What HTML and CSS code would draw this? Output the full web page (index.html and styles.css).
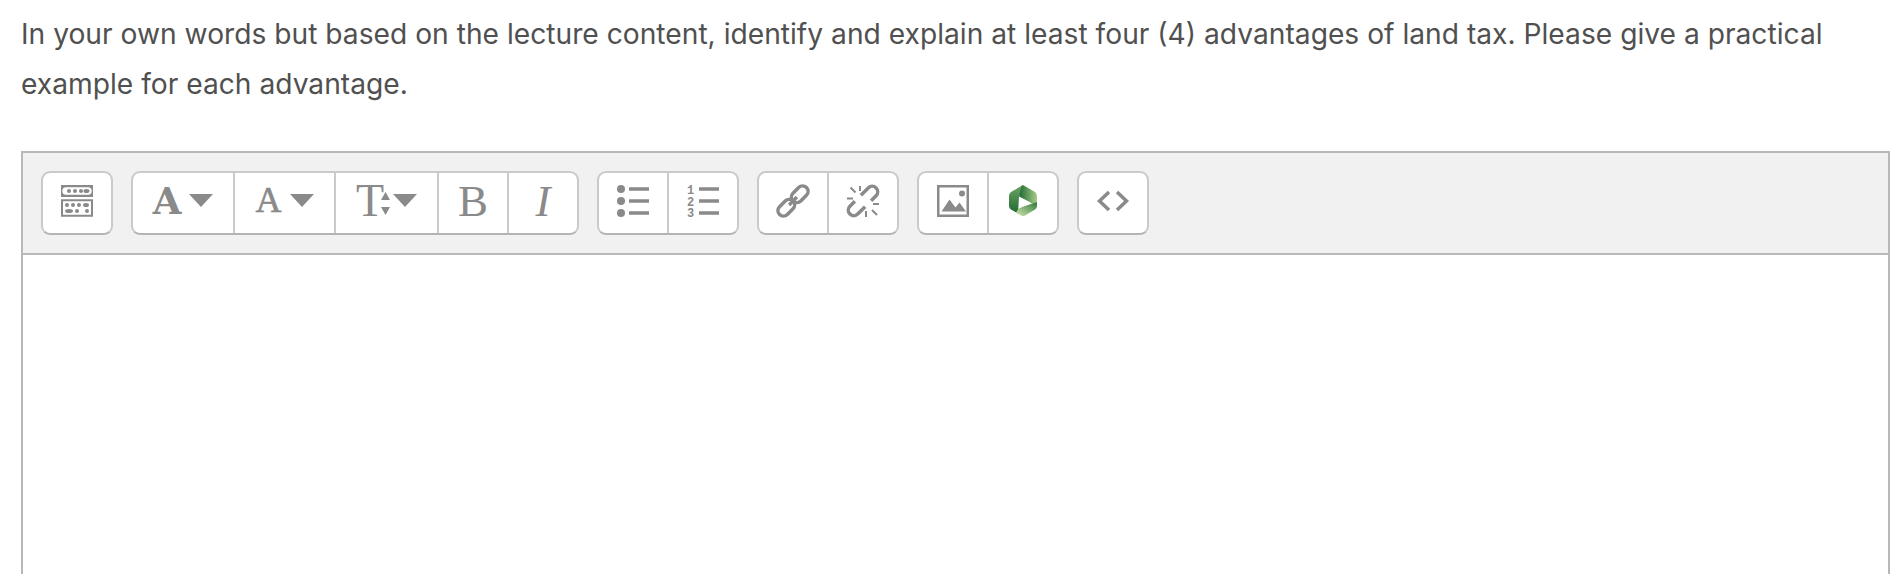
FILE: index.html
```html
<!DOCTYPE html>
<html>
<head>
  <title>Essay question</title>
  <meta charset="UTF-8">
  <link rel="stylesheet" href="styles.css">
</head>
<body>

<p class="question">In your own words but based on the lecture content, identify and explain at least four (4) advantages of land tax. Please give a practical example for each advantage.</p>

<div class="editor">
  <div class="toolbar">

    <div class="group">
      <button class="btn">
        <svg class="icon" viewBox="0 0 32 32">
          <path class="fill" fill-rule="evenodd" d="M0 0h32v12H0z M5 2.300a3.700 3.700 0 0 0 0 7.400h22a3.700 3.700 0 0 0 0-7.400z M0 14.300h32v17.500H0z M2 16.300v13.500h28V16.300z"/>
          <circle class="fill" cx="8" cy="6" r="2"/><circle class="fill" cx="14" cy="6" r="2"/><circle class="fill" cx="20" cy="6" r="2"/><ellipse class="fill" cx="25.500" cy="6" rx="3" ry="2"/>
          <circle class="fill" cx="6" cy="20" r="2"/><circle class="fill" cx="12" cy="20" r="2"/><circle class="fill" cx="18" cy="20" r="2"/><ellipse class="fill" cx="25" cy="20" rx="3" ry="2"/>
          <ellipse class="fill" cx="8" cy="26" rx="4" ry="2"/><circle class="fill" cx="16" cy="26" r="2"/><circle class="fill" cx="26" cy="26" r="2"/>
        </svg>
      </button>
    </div>

    <div class="group">
      <button class="btn btn-first">
        <span class="glyph glyph-font">A</span>
        <span class="caret"></span>
      </button>
      <button class="btn btn-font">
        <span class="glyph glyph-face">A</span>
        <span class="caret"></span>
      </button>
      <button class="btn btn-size">
        <span class="glyph glyph-size">T</span>
        <svg class="size-arrows" viewBox="0 0 9 24">
          <path class="fill" d="M4.500 0L9 8H0z M0 15h9l-4.500 8z"/>
        </svg>
        <span class="caret"></span>
      </button>
      <button class="btn"><span class="glyph glyph-big">B</span></button>
      <button class="btn"><span class="glyph glyph-big glyph-italic">I</span></button>
    </div>

    <div class="group">
      <button class="btn">
        <svg class="icon" viewBox="0 0 32 32">
          <circle class="fill" cx="4" cy="4" r="4"/><circle class="fill" cx="4" cy="16" r="4"/><circle class="fill" cx="4" cy="28" r="4"/>
          <path class="fill" d="M12 2.200h20v3.600H12z M12 14.200h20v3.600H12z M12 26.200h20v3.600H12z"/>
        </svg>
      </button>
      <button class="btn">
        <svg class="icon" viewBox="0 0 32 32">
          <text class="list-num" x="0" y="9">1</text><text class="list-num" x="0" y="21">2</text><text class="list-num" x="0" y="32">3</text>
          <path class="fill" d="M12 2.200h20v3.600H12z M12 14.200h20v3.600H12z M12 26.200h20v3.600H12z"/>
        </svg>
      </button>
    </div>

    <div class="group">
      <button class="btn">
        <svg class="icon" viewBox="0 0 32 32">
          <g class="line" transform="rotate(-45 16 16)">
            <rect x="-3" y="10.500" width="19" height="11" rx="5.500"/>
            <rect x="16" y="10.500" width="19" height="11" rx="5.500"/>
            <path d="M10.500 16h11"/>
          </g>
        </svg>
      </button>
      <button class="btn">
        <svg class="icon" viewBox="0 0 32 32">
          <g class="line" transform="rotate(-45 16 16)">
            <path d="M10 10.500H3a5.500 5.500 0 0 0 0 11h10.500"/>
            <path d="M22 21.500h7a5.500 5.500 0 0 0 0-11H18.500"/>
          </g>
          <path class="tick" d="M3.500 2.500l5 5 M13 1v5 M0 13.500h6 M25 25l5 5 M19 26v6 M26 19h6"/>
        </svg>
      </button>
    </div>

    <div class="group">
      <button class="btn">
        <svg class="icon" viewBox="0 0 32 32">
          <path class="fill" fill-rule="evenodd" d="M0 0h32v32H0z M2.500 2.500v27h27v-27z"/>
          <circle class="fill" cx="25" cy="8.500" r="3"/>
          <path class="fill" d="M4.500 26.500l8-12 6 8 4-5 6.500 9z"/>
        </svg>
      </button>
      <button class="btn">
        <svg class="icon" viewBox="0 0 32 32">
          <defs>
            <linearGradient id="h5pLeft" x1="0" y1="0" x2="0" y2="1"><stop offset="0" stop-color="#6ea563"/><stop offset="1" stop-color="#1f6a33"/></linearGradient>
            <linearGradient id="h5pTop" x1="0" y1="0" x2="1" y2="0"><stop offset="0" stop-color="#1f6a33"/><stop offset="1" stop-color="#a9cb8a"/></linearGradient>
            <linearGradient id="h5pBottom" x1="1" y1="0" x2="0" y2="1"><stop offset="0" stop-color="#2f7a3a"/><stop offset="1" stop-color="#d3e5ae"/></linearGradient>
          </defs>
          <path fill="url(#h5pLeft)" d="M16 0L4 7Q2 8.500 2 11V21Q2 23 4 24.500L11 28.500L12 12Z"/>
          <path fill="url(#h5pTop)" d="M14.500 1L16 0L28 7Q30 8.500 30 11V21L12 12Z"/>
          <path fill="url(#h5pBottom)" d="M30 17V21Q30 23 28 24.500L18 30.500Q16 31.500 14 30.500L9 27.500L12 23Z"/>
          <path fill="#fff" d="M12 11.500l11.500 6-11.500 6z"/>
        </svg>
      </button>
    </div>

    <div class="group">
      <button class="btn">
        <svg class="icon" viewBox="0 0 32 32">
          <path class="chevron" d="M12 7L2.500 16l9.500 9 M20 7l9.500 9-9.500 9"/>
        </svg>
      </button>
    </div>

  </div>
  <div class="content"></div>
</div>

</body>
</html>
```

FILE: styles.css
```css
html, body {
    margin: 0;
    height: 574px;
    overflow: hidden;
    background-color: white;
}
.question {
    margin: 0;
    padding: 10px 21px 0 21px;
    height: 142px;
    box-sizing: border-box;
    font-family: Inter, sans-serif;
    font-size: 28.2px;
    line-height: 49.5px;
    color: #505050;
}
.editor {
    margin-top: 9px;
    margin-left: 21px;
    border: 2px solid #b8b8b8;
    height: 500px;
}
.toolbar {
    display: flex;
    gap: 18px;
    padding: 18px;
    background-color: #f1f1f1;
    border-bottom: 2px solid #b8b8b8;
}
.group {
    display: flex;
    height: 64px;
    box-sizing: border-box;
    background-color: white;
    border: 2px solid #cacaca;
    border-bottom-color: #b4b4b4;
    border-radius: 9px;
}
.btn {
    display: flex;
    align-items: center;
    justify-content: center;
    width: 70px;
    padding: 0 0 4px 0;
    background: none;
    border: 0;
    border-left: 2px solid #cacaca;
}
.btn:first-child {
    width: 68px;
    border-left: 0;
}
.btn.btn-first {
    width: 100px;
}
.btn.btn-font {
    width: 101px;
}
.btn.btn-size {
    width: 103px;
}
.icon {
    width: 32px;
    height: 32px;
    overflow: visible;
}
.fill {
    fill: #8a8a8a;
}
.line {
    fill: none;
    stroke: #8a8a8a;
    stroke-width: 3.500;
}
.tick {
    fill: none;
    stroke: #8a8a8a;
    stroke-width: 2;
}
.chevron {
    fill: none;
    stroke: #8a8a8a;
    stroke-width: 3.500;
}
.list-num {
    fill: #8a8a8a;
    font-family: "Liberation Mono", monospace;
    font-size: 12px;
    font-weight: bold;
}
.glyph {
    color: #8a8a8a;
    font-family: "Liberation Serif", serif;
    line-height: 1;
}
.glyph-font {
    font-family: "DejaVu Serif", serif;
    font-weight: bold;
    font-size: 37px;
    margin-right: 8px;
}
.glyph-face {
    font-size: 36px;
    margin-right: 8px;
    margin-top: -3px;
    -webkit-text-stroke: 0.6px #8a8a8a;
}
.glyph-size {
    font-size: 46px;
}
.glyph-big {
    font-size: 45px;
}
.glyph-italic {
    font-style: italic;
}
.size-arrows {
    width: 9px;
    height: 24px;
    margin-left: -3px;
    margin-top: 6px;
    margin-right: 3px;
}
.caret {
    width: 0;
    height: 0;
    margin-top: -2px;
    border-left: 12.500px solid transparent;
    border-right: 12.500px solid transparent;
    border-top: 13px solid #8a8a8a;
}
.content {
    background-color: white;
}
```
